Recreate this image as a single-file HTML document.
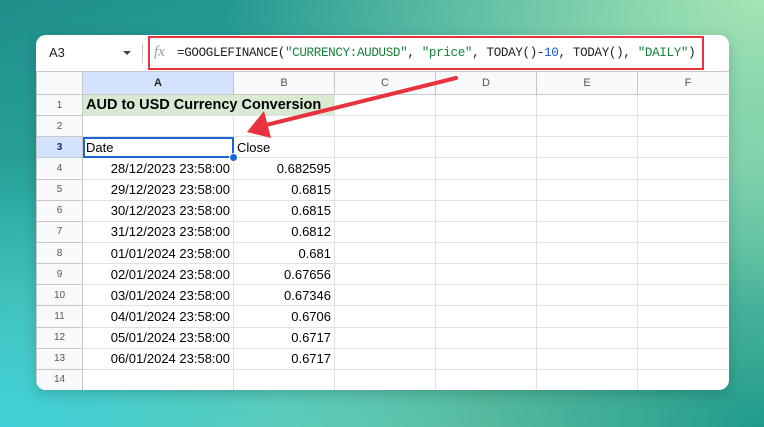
<!DOCTYPE html>
<html><head><style>
html,body{margin:0;padding:0;width:764px;height:427px;overflow:hidden}
body{background:linear-gradient(160deg,#1f8f8c 0%,#2aa39a 30%,#5fc3a5 60%,#8fd9b0 100%);position:relative;font-family:"Liberation Sans",Arial,sans-serif}
.bg2{position:absolute;inset:0;background:radial-gradient(ellipse at 0% 100%,#3fd0d8 0%,rgba(63,208,216,0) 45%),radial-gradient(ellipse at 100% 0%,#a6e4b4 0%,rgba(166,228,180,0) 50%),radial-gradient(ellipse at 100% 100%,#1e9a8c 0%,rgba(30,154,140,0) 45%)}
.card{position:absolute;left:36px;top:35px;width:693px;height:355px;background:#fff;border-radius:10px;overflow:hidden;box-shadow:0 4px 14px rgba(0,0,0,.18)}
.top{position:absolute;left:0;top:0;width:693px;height:36px;background:#fff;border-bottom:1px solid #c7c7c7}
.grid{position:absolute;left:0;top:36px}
table{border-collapse:collapse;font-size:13px;color:#000;table-layout:fixed;width:702px}
td{border:1px solid #e1e1e1;height:20.15px;padding:0 3px;white-space:nowrap;overflow:hidden}
td.rh{text-align:center;font-size:10px;color:#555;background:#f8f9fa;border-color:#c7c7c7;padding:0}
tr.ch td{background:#f8f9fa;text-align:center;font-size:11px;color:#555;height:22px;border-color:#c7c7c7}
.r{text-align:right}
</style></head><body><div class="bg2"></div>
<div class="card">
<div class="top">
<div style="position:absolute;left:13px;top:10px;font-size:13px;color:#222">A3</div>
<div style="position:absolute;left:87px;top:16px;width:0;height:0;border-left:4px solid transparent;border-right:4px solid transparent;border-top:4px solid #444"></div>
<div style="position:absolute;left:106px;top:8px;width:1px;height:20px;background:#ccc"></div>
<div style="position:absolute;left:114px;top:3px;width:552px;height:30px;border:2px solid #e8333f;box-sizing:content-box;margin:-2px"></div>
<div style="position:absolute;left:118px;top:9px;font-family:'Liberation Serif',serif;font-style:italic;font-size:15px;color:#999">fx</div>
<div style="position:absolute;left:141px;top:11px;font-family:'Liberation Mono',monospace;font-size:12.6px;color:#222;letter-spacing:-0.36px">=GOOGLEFINANCE(<span style="color:#188038">"CURRENCY:AUDUSD"</span>, <span style="color:#188038">"price"</span>, TODAY()-<span style="color:#1a55d6">10</span>, TODAY(), <span style="color:#188038">"DAILY"</span>)</div>
</div>
<div class="grid"><table>
<colgroup><col style="width:46px"><col style="width:151px"><col style="width:101px"><col style="width:101px"><col style="width:101px"><col style="width:101px"><col style="width:101px"></colgroup>
<tr class="ch"><td class="rh" style="font-size:10px"></td><td style="background:#d3e3fd;color:#222;font-weight:bold">A</td><td>B</td><td>C</td><td>D</td><td>E</td><td>F</td></tr>
<tr><td class="rh">1</td><td colspan="2" style="background:#d9ead3;font-weight:bold;font-size:14.5px;padding-left:3px;border-right-color:#e1e1e1">AUD to USD Currency Conversion</td><td></td><td></td><td></td><td></td></tr>
<tr><td class="rh">2</td><td></td><td></td><td></td><td></td><td></td><td></td></tr>
<tr><td class="rh" style="background:#d3e3fd;color:#0b2f7a;font-weight:bold">3</td><td style="outline:2px solid #1a66d6;outline-offset:-2px;position:relative;overflow:visible">Date<span style="position:absolute;right:-5px;bottom:-5px;width:7px;height:7px;border-radius:50%;background:#1a66d6;border:1px solid #fff"></span></td><td>Close</td><td></td><td></td><td></td><td></td></tr>
<tr><td class="rh">4</td><td class="r">28/12/2023 23:58:00</td><td class="r">0.682595</td><td></td><td></td><td></td><td></td></tr>
<tr><td class="rh">5</td><td class="r">29/12/2023 23:58:00</td><td class="r">0.6815</td><td></td><td></td><td></td><td></td></tr>
<tr><td class="rh">6</td><td class="r">30/12/2023 23:58:00</td><td class="r">0.6815</td><td></td><td></td><td></td><td></td></tr>
<tr><td class="rh">7</td><td class="r">31/12/2023 23:58:00</td><td class="r">0.6812</td><td></td><td></td><td></td><td></td></tr>
<tr><td class="rh">8</td><td class="r">01/01/2024 23:58:00</td><td class="r">0.681</td><td></td><td></td><td></td><td></td></tr>
<tr><td class="rh">9</td><td class="r">02/01/2024 23:58:00</td><td class="r">0.67656</td><td></td><td></td><td></td><td></td></tr>
<tr><td class="rh">10</td><td class="r">03/01/2024 23:58:00</td><td class="r">0.67346</td><td></td><td></td><td></td><td></td></tr>
<tr><td class="rh">11</td><td class="r">04/01/2024 23:58:00</td><td class="r">0.6706</td><td></td><td></td><td></td><td></td></tr>
<tr><td class="rh">12</td><td class="r">05/01/2024 23:58:00</td><td class="r">0.6717</td><td></td><td></td><td></td><td></td></tr>
<tr><td class="rh">13</td><td class="r">06/01/2024 23:58:00</td><td class="r">0.6717</td><td></td><td></td><td></td><td></td></tr>
<tr><td class="rh">14</td><td></td><td></td><td></td><td></td><td></td><td></td></tr>
</table></div>
</div>
<svg style="position:absolute;left:0;top:0" width="764" height="427"><line x1="456" y1="78" x2="262" y2="126" stroke="#e8333f" stroke-width="4" stroke-linecap="round"/><polygon points="247,132 264,111 271,138" fill="#e8333f"/></svg>
</body></html>
